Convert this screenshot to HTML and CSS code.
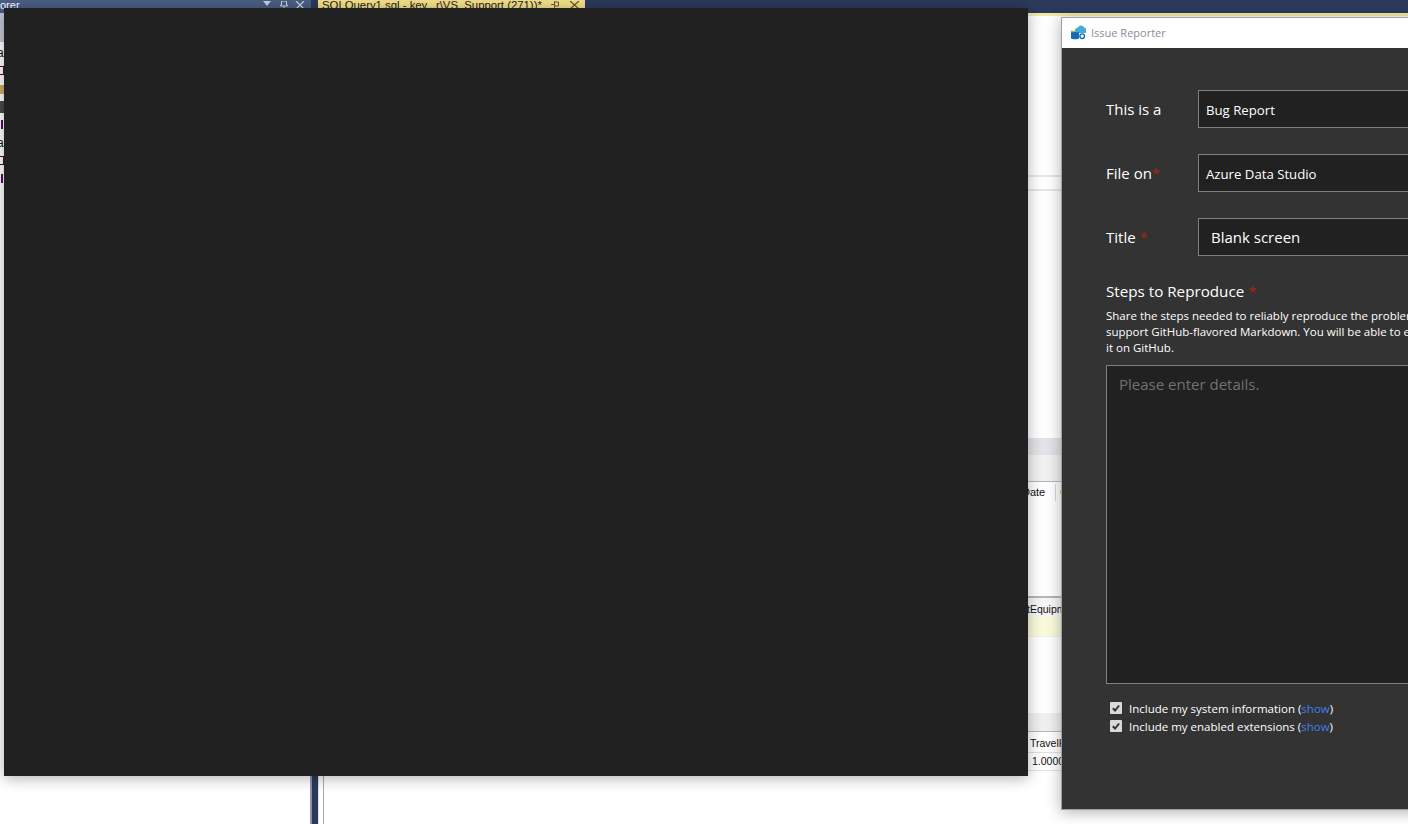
FILE: index.html
```html
<!DOCTYPE html>
<html lang="en">
<head>
<meta charset="utf-8">
<title>Issue Reporter</title>
<link rel="stylesheet" href="styles.css">
</head>
<body>
<div class="desktop">
  <div class="ide">
    <div class="ide-top">
      <div class="panel-title">
        <span class="panel-name">orer</span>
        <span class="panel-controls">
          <svg width="44" height="8" viewBox="0 0 44 8"><path d="M0 0h8L4 5z" fill="#c9d1de"/><path d="M18.500 0h5v4h1v1h-7V4h1zM21 5v3" fill="none" stroke="#c9d1de"/><path d="M33 0l8 8M41 0l-8 8" stroke="#c9d1de" stroke-width="1.3"/></svg>
        </span>
      </div>
      <div class="doc-tab">
        <span class="doc-name">SQLQuery1.sql - key...r\VS_Support (271))*</span>
        <svg class="doc-icons" width="30" height="8" viewBox="0 0 30 8"><path d="M0 3.500h3M3.500 0v7M3.500 1h4v4h-4" fill="none" stroke="#6b5c2c"/><path d="M19 0l9 8M28 0l-9 8" stroke="#6b5c2c" stroke-width="1.3"/></svg>
      </div>
    </div>
    <div class="yellow-rule"></div>
    <div class="left-frags">
      <span class="frag frag-head"></span>
      <span class="frag frag-a">a</span>
      <span class="frag frag-box"></span>
      <span class="frag frag-gold"></span>
      <span class="frag frag-grey"></span>
      <span class="frag frag-p"></span>
      <span class="frag frag-a2">a</span>
      <span class="frag frag-box2"></span>
      <span class="frag frag-p2"></span>
    </div>
    <div class="nav-strip"></div>
    <div class="gap-lines">
      <div class="gl gl-1"></div>
      <div class="gl gl-2"></div>
      <div class="gl gl-band"></div>
      <div class="gl gl-band2"></div>
      <div class="gl gl-date">Date<i class="gl-sep"></i><i class="gl-c">C</i></div>
      <div class="gl gl-equip">tEquipm</div>
      <div class="gl gl-pale"></div>
      <div class="gl gl-band3"></div>
      <div class="gl gl-travel">TravelH</div>
      <div class="gl gl-num">1.0000</div>
    </div>
  </div>

  <div class="blank-window"></div>

  <section class="reporter">
    <header class="rep-title">
      <svg class="rep-logo" width="16" height="16" viewBox="0 0 16 16">
        <path d="M5 7a3 3 0 0 1 3-3.500A3.500 3.500 0 0 1 14.500 4 2.500 2.500 0 0 1 15 9H7a2 2 0 0 1-2-2z" fill="#45a9dc"/>
        <path d="M1 6.500l5 .5v3H1z" fill="#9cc33c"/>
        <path d="M1 8.500c1-.8 7-.8 8 0v6c-1 1-7 1-8 0z" fill="#1769b8"/>
        <circle cx="12.200" cy="12.200" r="2.300" fill="#fff" stroke="#1769b8" stroke-width="1.400"/>
      </svg>
      <span>Issue Reporter</span>
    </header>
    <div class="rep-body">
      <div class="row row-first">
        <label class="lab">This is a</label>
        <div class="field field-sel">Bug Report</div>
      </div>
      <div class="row">
        <label class="lab">File on<b class="req">*</b></label>
        <div class="field field-sel">Azure Data Studio</div>
      </div>
      <div class="row">
        <label class="lab">Title <b class="req">*</b></label>
        <div class="field field-text">Blank screen</div>
      </div>
      <h2 class="steps">Steps to Reproduce <b class="req">*</b></h2>
      <p class="hint">Share the steps needed to reliably reproduce the problem. Please include actual and expected results. We<br>support GitHub-flavored Markdown. You will be able to edit your issue and add screenshots when we preview<br>it on GitHub.</p>
      <div class="details">Please enter details.</div>
      <ul class="checks">
        <li class="check"><span class="box"><svg width="12" height="12" viewBox="0 0 12 12"><path d="M2.800 6.200l2.300 2.300 4-5" fill="none" stroke="#333" stroke-width="2"/></svg></span><span>Include my system information (<a class="show">show</a>)</span></li>
        <li class="check"><span class="box"><svg width="12" height="12" viewBox="0 0 12 12"><path d="M2.800 6.200l2.300 2.300 4-5" fill="none" stroke="#333" stroke-width="2"/></svg></span><span>Include my enabled extensions (<a class="show">show</a>)</span></li>
      </ul>
    </div>
  </section>
</div>
</body>
</html>
```
FILE: styles.css
```css
* { box-sizing: border-box; }
html, body { margin: 0; padding: 0; background: #fff; }
.desktop {
  position: relative;
  width: 1408px;
  height: 824px;
  overflow: hidden;
  background: #fff;
  font-family: "Open Sans", "Noto Sans", sans-serif;
}
.ide { position: absolute; inset: 0; }
.ide-top {
  display: flex;
  height: 13px;
  background: #2a3a5a;
}
.panel-title {
  width: 311px;
  height: 13px;
  display: flex;
  justify-content: space-between;
  background: #4a5f85;
  color: #fff;
  font: 11px/13px "Liberation Sans", sans-serif;
  overflow: hidden;
}
.panel-name { margin-top: -1px; }
.panel-controls { display: block; padding: 1px 4px 0 0; }
.panel-controls svg { display: block; }
.doc-tab {
  margin-left: 7px;
  width: 267px;
  height: 13px;
  display: flex;
  justify-content: space-between;
  background: #f5e08a;
  color: #222;
  padding: 0 4px;
  font: 11.350px/13px "Liberation Sans", sans-serif;
  overflow: hidden;
  white-space: nowrap;
}
.doc-name { margin-top: -1px; }
.doc-icons { display: block; margin-top: 1px; flex: none; }
.yellow-rule {
  position: absolute;
  left: 1028px;
  right: 0;
  top: 13px;
  height: 3px;
  background: #f6e9a6;
}
.left-frags { position: absolute; left: 0; top: 0; width: 4px; height: 200px; overflow: hidden; }
.frag { position: absolute; left: 0; display: block; width: 4px; }
.frag-head { top: 13px; height: 29px; background: #c3c9d6; }
.frag-a, .frag-a2 { left: -3px; width: 8px; font: 12px/12px "Liberation Sans", sans-serif; color: #111; }
.frag-a { top: 47px; }
.frag-a2 { top: 137px; }
.frag-box { top: 66px; height: 9px; border: 1px solid #4a0a2a; border-left: 0; }
.frag-box2 { top: 156px; height: 9px; border: 1px solid #4a0a2a; border-left: 0; }
.frag-gold { top: 85px; height: 9px; background: #cfae6e; }
.frag-grey { top: 101px; height: 12px; background: #4a4a4a; }
.frag-p { top: 120px; height: 9px; width: 2px; left: 1px; background: #5a0a5a; }
.frag-p2 { top: 174px; height: 9px; width: 2px; left: 1px; background: #5a0a5a; }
.nav-strip {
  position: absolute;
  left: 310px;
  top: 760px;
  width: 14px;
  height: 64px;
  background: linear-gradient(90deg, #8a94a8 0, #8a94a8 2px, #2a3a5a 2px, #2a3a5a 8px, #b8c0d0 8px, #fff 9px, #fff 13px, #aaa 13px);
}
.gap-lines { position: absolute; left: 1028px; top: 0; width: 34px; height: 824px; overflow: hidden; }
.gl { position: absolute; left: 0; width: 34px; font: 11px/16px "Liberation Sans", sans-serif; color: #111; white-space: nowrap; }
.gl-1 { top: 175px; height: 2px; background: #e6e6ee; }
.gl-2 { top: 189px; height: 2px; background: #e6e6ee; }
.gl-band { top: 438px; height: 17px; background: #e3e3e8; }
.gl-band2 { top: 455px; height: 27px; background: #f1f1f1; border-bottom: 1px solid #b5b5bd; }
.gl-date { top: 484px; height: 18px; text-indent: -6px; }
.gl-sep { position: absolute; left: 27px; top: 0; width: 1px; height: 17px; background: #d5d5d5; }
.gl-c { position: absolute; left: 38px; top: 0; font-style: normal; color: #b0752a; }
.gl-equip { top: 596px; height: 21px; font-size: 10.500px; line-height: 22px; border-top: 2px solid #b5b5bd; text-indent: -1px; background: #f7f7f7; }
.gl-pale { top: 617px; height: 20px; background: #fbfbdc; border-bottom: 1px solid #eee; }
.gl-band3 { top: 713px; height: 19px; background: #f0f0f0; border-bottom: 1px solid #b5b5bd; }
.gl-travel { top: 733px; height: 20px; font-size: 10.500px; line-height: 20px; padding-left: 2px; border-bottom: 1px solid #e2e2e2; }
.gl-num { top: 753px; height: 18px; font-size: 10.500px; line-height: 17px; padding-left: 4px; border-bottom: 1px solid #e2e2e2; }

.blank-window {
  position: absolute;
  left: 4px;
  top: 8px;
  width: 1024px;
  height: 768px;
  background: #212121;
  box-shadow: 0 2px 14px rgba(0, 0, 0, .32);
}
.reporter {
  position: absolute;
  left: 1061px;
  top: 17px;
  width: 640px;
  height: 793px;
  display: flex;
  flex-direction: column;
  border: 1px solid #a0a0a0;
  box-shadow: 0 2px 14px rgba(0, 0, 0, .32);
}
.rep-title {
  height: 30px;
  flex: none;
  display: flex;
  align-items: center;
  gap: 5px;
  padding: 0 0 2px 8px;
  background: #fff;
  color: #8f8a9a;
  font-size: 11px;
}
.rep-logo { display: block; flex: none; }
.rep-body {
  flex: 1;
  background: #333;
  color: #fff;
  padding: 42px 0 0 44px;
}
.row { display: flex; align-items: center; height: 38px; margin-bottom: 26px; }
.lab { width: 92px; flex: none; font-size: 15px; line-height: 20px; }
.req { color: #a1260d; font-weight: 400; }
.field {
  width: 480px;
  height: 38px;
  background: #212121;
  border: 1px solid #808080;
  white-space: nowrap;
}
.field-sel { padding-left: 7px; font-size: 13.200px; line-height: 38px; }
.field-text { padding-left: 12px; font-size: 15px; line-height: 36px; }
.steps { margin: -1px 0 0; font-size: 15.200px; line-height: 20px; font-weight: 400; }
.hint { margin: 7px 0 0; font-size: 11.500px; line-height: 16px; white-space: nowrap; }
.details {
  margin-top: 9px;
  width: 572px;
  height: 319px;
  padding: 8px 12px;
  background: #212121;
  border: 1px solid #808080;
  color: #727272;
  font-size: 15px;
  line-height: 20px;
}
.checks { list-style: none; margin: 15px 0 0; padding: 0 0 0 4px; }
.check { display: flex; align-items: center; gap: 7px; height: 18px; font-size: 11.500px; }
.box {
  width: 12px;
  height: 12px;
  flex: none;
  background: #d9d9d9;
  border-radius: 1px;
}
.box svg { display: block; }
.show { color: #3b82f0; }
```
